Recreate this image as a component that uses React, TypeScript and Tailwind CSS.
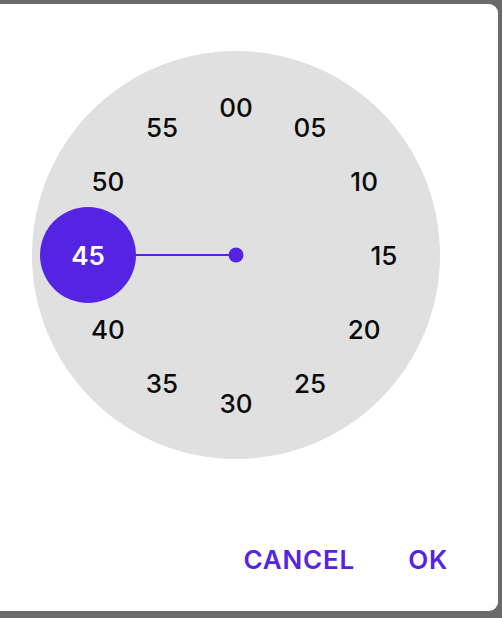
const MINUTES = ["00", "05", "10", "15", "20", "25", "30", "35", "40", "45", "50", "55"];

const SIZE = 408;
const C = SIZE / 2;
const R = 148;
const SELECTED = 9;

export default function App() {
  return (
    <div
      className="h-[618px] w-[502px] bg-[#6a6a6a] pt-1 pr-1 pb-[7px]"
      style={{ fontFamily: "Inter, 'Noto Sans', sans-serif" }}
    >
      <div className="flex h-full flex-col rounded-r-[9px] bg-white">
        {/* Clock face */}
        <div className="relative mt-[47px] ml-[32px] h-[408px] w-[408px] rounded-full bg-[#e0e0e0]">
          <svg className="absolute inset-0" width={SIZE} height={SIZE}>
            <line x1={C} y1={C} x2={C - R} y2={C} stroke="#5523e2" strokeWidth="2" />
            <circle cx={C} cy={C} r="7.5" fill="#5523e2" />
            <circle cx={C - R} cy={C} r="48" fill="#5523e2" />
          </svg>
          {MINUTES.map((m, i) => {
            const a = (i / 12) * Math.PI * 2;
            const x = C + R * Math.sin(a);
            const y = C - R * Math.cos(a) + 1;
            const sel = i === SELECTED;
            return (
              <span
                key={m}
                className={`absolute -translate-x-1/2 -translate-y-1/2 text-[26px] leading-none font-medium ${sel ? "font-semibold text-white" : "text-[#0a0a0a]"}`}
                style={{ left: x, top: y }}
              >
                {m}
              </span>
            );
          })}
        </div>

        {/* Actions */}
        <div className="mt-auto mb-[38px] flex justify-end gap-[53px] pr-[50px]">
          <button className="text-[26px] leading-none font-semibold tracking-[0.8px] text-[#5523e2]">CANCEL</button>
          <button className="text-[26px] leading-none font-semibold tracking-[0.8px] text-[#5523e2]">OK</button>
        </div>
      </div>
    </div>
  );
}
